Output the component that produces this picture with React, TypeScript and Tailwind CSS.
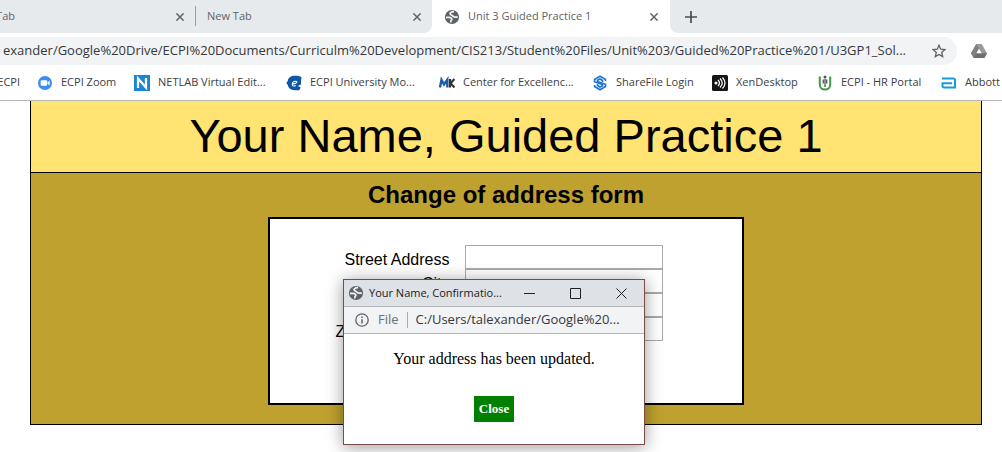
import type { ReactNode } from 'react';

const UI_FONT = "font-['Open_Sans','Noto_Sans',sans-serif]";

function GlobeIcon({ className = 'size-4' }: { className?: string }) {
  return (
    <svg viewBox="0 0 16 16" className={`shrink-0 ${className}`} aria-hidden="true">
      <circle cx="8" cy="8" r="7.1" fill="#5f6368" />
      <g fill="none" stroke="#f1f3f4" strokeWidth="1.7">
        <path d="M10 2.700C6.500 2.700 5.200 4.600 6.600 5.400S9 8.100 11 8.100H13.800" />
        <path d="M2 8.300H5.200C7.600 8.300 8.400 10.400 7.400 11S6.700 12.600 7 13.600" />
      </g>
    </svg>
  );
}

function CrossIcon({ className = 'size-2' }: { className?: string }) {
  return (
    <svg viewBox="0 0 8 8" className={className} aria-hidden="true">
      <path d="M.4.4l7.200 7.200M7.600.4L.4 7.600" stroke="currentColor" strokeWidth="1.5" fill="none" />
    </svg>
  );
}

interface TabProps {
  title: string;
  className: string;
  active?: boolean;
  clipped?: boolean;
}

function Tab({ title, className, active, clipped }: TabProps) {
  return (
    <div className={`flex shrink-0 items-center ${className}`}>
      {active && <GlobeIcon className="mr-2 size-4" />}
      <span className={clipped ? 'flex w-[15px] justify-end overflow-hidden' : ''}>{title}</span>
      <button type="button" aria-label={`Close ${title}`} className="ml-auto text-[#5f6368]">
        <CrossIcon />
      </button>
    </div>
  );
}

const BOOKMARKS: { label: string; width: string; icon: ReactNode }[] = [
  {
    label: 'ECPI Zoom',
    width: 'w-[97px]',
    icon: (
      <>
        <circle cx="8" cy="8" r="7" fill="#3b8cf5" />
        <rect x="3.7" y="5.2" width="6.500" height="5.600" rx="1.200" fill="#fff" />
        <path d="M10.600 7.200l2-1.600v4.800l-2-1.600z" fill="#fff" />
      </>
    ),
  },
  {
    label: 'NETLAB Virtual Edit...',
    width: 'w-[152px]',
    icon: (
      <>
        <path d="M0 0h16v16H0z" fill="#1786d8" />
        <path d="M4 13V3.500l8 9V3" fill="none" stroke="#fff" strokeWidth="2.2" />
      </>
    ),
  },
  {
    label: 'ECPI University Mo...',
    width: 'w-[153px]',
    icon: (
      <>
        <path d="M15.500 2L12 .8H8.500C4 .8 2 3.500 1.800 6L.3 8l1.500 2c.5 3 3 5.200 6.700 5.200h4.700l1.600-2.700-3-1.500 3.200-1.500V6z" fill="#0d57a5" />
        <path d="M6.300 8.800c2.700.3 4.700-.8 4.500-2.300-2.600-1-4.900 1-4.500 3.300.2 1.500 2 1.500 3.400.7" fill="none" stroke="#fff" strokeWidth="1.1" />
      </>
    ),
  },
  {
    label: 'Center for Excellenc...',
    width: 'w-[153px]',
    icon: (
      <>
        <path d="M1 12.500L2.500 4.800 5 9.500l3.300-4.700v7.700" fill="none" stroke="#1c5fa8" strokeWidth="2.4" />
        <path d="M11 4v8.500M15.500 4l-4 4.200 4 4.300" fill="none" stroke="#333" strokeWidth="2.2" />
      </>
    ),
  },
  {
    label: 'ShareFile Login',
    width: 'w-[120px]',
    icon: (
      <g fill="none" stroke="#1c74d4" strokeWidth="1.6">
        <path d="M13.500 6V4.500L8 1.200 2.500 4.500v2.300L10.500 9.500v1.200L8 12 5.500 10.500V9" />
        <path d="M2.500 10v1.500L8 14.800l5.500-3.300V9.200L5.500 6.500V5.300L8 4l2.500 1.500V7" />
      </g>
    ),
  },
  {
    label: 'XenDesktop',
    width: 'w-[105px]',
    icon: (
      <>
        <rect width="16" height="16" rx="1.5" fill="#151515" />
        <circle cx="4" cy="8" r="1.5" fill="#fff" />
        <path d="M6 5q3 3 0 6M8 3.500q4.500 4.500 0 9M10.500 2.500q5 5.500 0 11" fill="none" stroke="#fff" strokeWidth="1.2" />
      </>
    ),
  },
  {
    label: 'ECPI - HR Portal',
    width: 'w-[124px]',
    icon: (
      <>
        <path d="M2.800 1.500V10c0 6 10.400 6 10.400 0V1.500" fill="none" stroke="#3f9b45" strokeWidth="2" />
        <path d="M8 4v8M6.300 4.500v4M9.700 4.500v4" stroke="#4c5357" strokeWidth="1.3" />
        <circle cx="8" cy="2" r="1.5" fill="#4c5357" />
      </>
    ),
  },
  {
    label: 'Abbott',
    width: 'w-[80px]',
    icon: <path d="M1 3.500h11.500a1.500 1.500 0 0 1 1.500 1.500v7.500H3a1.500 1.500 0 0 1-1.500-1.500V8.300h9.500" fill="none" stroke="#169bd7" strokeWidth="2" />,
  },
];

function BrowserChrome() {
  return (
    <header className={`overflow-hidden border-b border-[#b4b5b8] bg-white text-[#3c4043] ${UI_FONT}`}>
      <div className="flex h-[33px] bg-white text-[11px] text-[#5f6368]">
        <div className="flex shrink-0 rounded-br-lg bg-[#e7eaed]">
          <Tab title="Tab" clipped className="w-[184px]" />
          <div className="mt-1.5 ml-[11px] h-5 w-px bg-[#9a9da1]" />
          <Tab title="New Tab" className="w-[225px] pl-[11px]" />
          <div className="w-[11px]" />
        </div>
        <Tab title="Unit 3 Guided Practice 1" active className="w-[238px] px-3" />
        <div className="flex grow items-center rounded-bl-lg bg-[#e7eaed] pl-[15px]">
          <button type="button" aria-label="New tab">
            <svg viewBox="0 0 12 12" className="size-3" aria-hidden="true">
              <path d="M6 0v12M0 6h12" stroke="#4a4d51" strokeWidth="1.7" />
            </svg>
          </button>
        </div>
      </div>
      <div className="flex items-center gap-[14px] pt-1 pr-[15px]">
        <div className="flex h-7 grow items-center rounded-r-full bg-[#f1f3f4] pr-[11px]">
          <input
            readOnly
            aria-label="Address"
            className="min-w-0 grow bg-transparent pr-[26px] text-right text-[13px] text-[#35383c] outline-none"
            value="exander/Google%20Drive/ECPI%20Documents/Curriculm%20Development/CIS213/Student%20Files/Unit%203/Guided%20Practice%201/U3GP1_Sol..."
          />
          <button type="button" aria-label="Bookmark this page">
            <svg viewBox="0 0 14 14" className="size-[14px]" aria-hidden="true">
              <path d="M7 1.300l1.700 3.900 4.200.4-3.200 2.800 1 4.200L7 10.400l-3.700 2.200 1-4.200L1.100 5.600l4.200-.4z" fill="none" stroke="#5f6368" strokeWidth="1.3" />
            </svg>
          </button>
        </div>
        <svg viewBox="0 0 16 14" className="h-[14px] w-4 shrink-0" aria-hidden="true">
          <path d="M5.300 0h5.400L16 9.300 13.300 14H2.700L0 9.300z" fill="#9a9a9a" />
          <path d="M5.300 0L8 4.700 2.700 14 0 9.300z" fill="#808080" />
          <path d="M5.300 9.300H16L13.300 14H2.700z" fill="#6f6f6f" />
          <path d="M8 4.700l2.700 4.600H5.300z" fill="#fff" />
        </svg>
      </div>
      <nav className="flex h-[35px] items-center text-[11px] whitespace-nowrap">
        <a href="#ecpi" className="flex w-[37px] shrink-0">
          <span className="flex w-5 justify-end overflow-hidden">ECPI</span>
        </a>
        {BOOKMARKS.map((b) => (
          <a key={b.label} href="#bookmark" className={`flex shrink-0 items-center gap-2 ${b.width}`}>
            <svg viewBox="0 0 16 16" className="size-4 shrink-0" aria-hidden="true">
              {b.icon}
            </svg>
            {b.label}
          </a>
        ))}
      </nav>
    </header>
  );
}

const FIELDS = ['Street Address', 'City', 'State', 'Zip/Postal Code'];

function AddressForm() {
  return (
    <form className="mx-auto h-[188px] w-1/2 border-2 border-black bg-white pt-[26px]">
      {FIELDS.map((field) => (
        <div key={field} className="flex h-6 items-center gap-4">
          <label htmlFor={field} className="w-[38%] pt-[6px] text-right text-base">
            {field}
          </label>
          <input id={field} type="text" className="h-6 w-[42%] border border-[#a9a9a9] bg-white px-1" />
        </div>
      ))}
    </form>
  );
}

function ConfirmationWindow() {
  return (
    <section
      role="dialog"
      aria-label="Your Name, Confirmation"
      className="absolute top-[279px] left-[343px] w-[302px] border border-[#7b4b45] bg-white shadow-[0_2px_16px_rgba(0,0,0,0.4)]"
    >
      <div className={`flex h-[27px] items-center border-b border-[#b4b5b8] bg-[#dee1e6] pl-1 text-[#202124] ${UI_FONT}`}>
        <GlobeIcon />
        <span className="ml-[5px] text-[11px]">Your Name, Confirmatio...</span>
        <div className="mr-[17px] ml-auto flex items-center gap-[35px]">
          <button type="button" aria-label="Minimize">
            <svg viewBox="0 0 11 11" className="size-[11px]" aria-hidden="true">
              <path d="M0 5.500h11" stroke="currentColor" />
            </svg>
          </button>
          <button type="button" aria-label="Maximize">
            <svg viewBox="0 0 11 11" className="size-[11px]" aria-hidden="true">
              <path d="M.5.5h10v10H.5z" fill="none" stroke="currentColor" />
            </svg>
          </button>
          <button type="button" aria-label="Close window">
            <svg viewBox="0 0 11 11" className="size-[11px]" aria-hidden="true">
              <path d="M.5.5l10 10M10.500.5l-10 10" stroke="currentColor" />
            </svg>
          </button>
        </div>
      </div>
      <div className={`flex h-[27px] items-center border-b border-[#b4b5b8] bg-[#f1f3f4] pl-[11px] text-[13px] ${UI_FONT}`}>
        <svg viewBox="0 0 14 14" className="size-[14px]" aria-hidden="true">
          <circle cx="7" cy="7" r="6.2" fill="none" stroke="#5f6368" strokeWidth="1.3" />
          <path d="M7 6.200v4.300M7 3.500v1.500" stroke="#5f6368" strokeWidth="1.5" />
        </svg>
        <span className="ml-[9px] text-[#6b7076]">File</span>
        <span className="mx-2 h-4 w-px bg-[#a9acb0]" />
        <input
          readOnly
          aria-label="Window address"
          className="min-w-0 grow bg-transparent text-[#35383c] outline-none"
          value="C:/Users/talexander/Google%20..."
        />
      </div>
      <div className="flex flex-col items-center pt-[13px] pb-[22px] font-['Liberation_Serif',serif]">
        <p className="text-base text-black">Your address has been updated.</p>
        <button type="button" className="mt-[25px] h-[26px] bg-[green] px-[5px] text-[13px] font-bold text-white">
          Close
        </button>
      </div>
    </section>
  );
}

export default function App() {
  return (
    <div className="relative min-h-screen overflow-hidden bg-white text-black">
      <BrowserChrome />
      <div className="pl-[10px]">
        <main className="mx-auto w-[96%] border-x border-b border-black bg-[#bfa12f] pb-[19px] font-['Liberation_Sans',Arial,sans-serif]">
          <h1 className="h-[72px] border-b border-black bg-[#ffe373] text-center text-[47px] leading-[70px]">
            Your Name, Guided Practice 1
          </h1>
          <h2 className="h-11 text-center text-2xl leading-[44px] font-bold">Change of address form</h2>
          <AddressForm />
        </main>
      </div>
      <ConfirmationWindow />
    </div>
  );
}
